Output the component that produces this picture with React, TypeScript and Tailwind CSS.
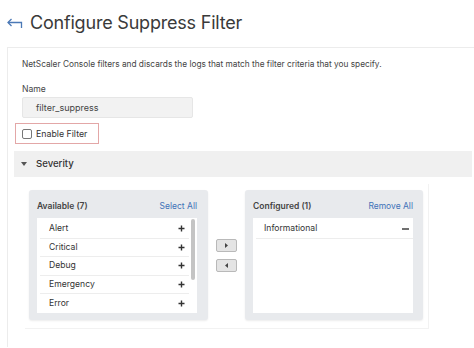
import React from "react";

const avail = ["Alert", "Critical", "Debug", "Emergency", "Error"];

function Plus() {
  return (
    <svg width="7" height="7" viewBox="0 0 7 7">
      <path d="M3.5 0.5v6M0.5 3.5h6" stroke="#333" strokeWidth="1.4" />
    </svg>
  );
}

export default function App() {
  return (
    <div
      className="w-[474px] h-[348px] bg-white overflow-hidden text-[#333]"
      style={{ fontFamily: "Inter, 'Noto Sans', sans-serif" }}
    >
      <div className="h-[47px] flex items-center pl-[7px] pb-[2px]">
        <svg width="16" height="12" viewBox="0 0 16 12" className="mt-[1px]">
          <path d="M1 5.5h13.5v5.5" fill="none" stroke="#4b79b6" strokeWidth="1.3" />
          <path d="M4.5 2L1 5.5L4.5 9" fill="none" stroke="#4b79b6" strokeWidth="1.3" />
        </svg>
        <span className="ml-[7px] text-[18px] leading-none text-[#3a3a3a] tracking-[-0.2px]">
          Configure Suppress Filter
        </span>
      </div>
      <div className="ml-[7px] border-l border-t border-[#ececec] pl-[14px] pt-[10px] h-[300px]">
        <div className="text-[8.3px] leading-[12px] text-[#444]">
          NetScaler Console filters and discards the logs that match the filter criteria that you specify.
        </div>
        <div className="mt-[13px] text-[8.6px] leading-[12px] text-[#444]">Name</div>
        <div className="mt-[2px] w-[171px] h-[21px] bg-[#f2f2f2] border border-[#e6e6e6] rounded-[2px] flex items-center pl-[13px] text-[9px] text-[#444]">
          filter_suppress
        </div>
        <div className="mt-[5px] -ml-[7px] w-[84px] h-[21px] border border-[#e3a7a7] flex items-center pl-[6px]">
          <div className="w-[10px] h-[10px] border border-[#777] rounded-[2px] bg-white" />
          <span className="ml-[4px] text-[8.8px] text-[#333]">Enable Filter</span>
        </div>
        <div className="mt-[7px] -ml-[8px] w-[458px] h-[26px] bg-[#f0f0f0] flex items-center pl-[7px]">
          <svg width="6" height="4" viewBox="0 0 6 4">
            <path d="M0 0h6L3 4z" fill="#555" />
          </svg>
          <span className="ml-[9px] text-[9.6px] font-medium text-[#333]">Severity</span>
        </div>
        <div className="mt-[7px] ml-[3px] w-[404px] h-[145px] border-r border-b border-[#f2f2f2] pt-[6px] pl-[4px] flex items-start">
          {/* Available */}
          <div className="w-[179px] h-[130px] bg-[#e8eaed] rounded-[3px] pl-[8px] pr-[11px] pt-[10px] shadow-[0_1px_2px_rgba(0,0,0,0.08)]">
            <div className="flex justify-between items-center h-[12px] text-[8.5px]">
              <span className="font-semibold text-[#444]">Available (7)</span>
              <span className="text-[#3f72b8]">Select All</span>
            </div>
            <div className="mt-[6px] h-[95px] bg-white relative pt-[2px] overflow-hidden">
              {avail.map((a, i) => (
                <div
                  key={a}
                  className={`ml-[3px] mr-[8px] h-[18.5px] flex items-center justify-between pl-[9px] pr-[4px] text-[8.6px] text-[#333] ${
                    i < 4 ? "border-b border-[#ededed]" : ""
                  }`}
                >
                  <span>{a}</span>
                  <Plus />
                </div>
              ))}
              <div className="absolute right-[2px] top-[1px] w-[4px] h-[61px] bg-[#c4c4c4] rounded-full" />
            </div>
          </div>
          {/* Arrows */}
          <div className="ml-[8px] mr-[8px] mt-[49px] flex flex-col gap-[7px]">
            <div className="w-[21px] h-[13px] bg-[#e4e4e4] border border-[#b9b9b9] rounded-[2px] flex items-center justify-center">
              <svg width="3" height="5" viewBox="0 0 3 5">
                <path d="M0 0L3 2.5L0 5z" fill="#444" />
              </svg>
            </div>
            <div className="w-[21px] h-[13px] bg-[#e4e4e4] border border-[#b9b9b9] rounded-[2px] flex items-center justify-center">
              <svg width="3" height="5" viewBox="0 0 3 5">
                <path d="M3 0L0 2.5L3 5z" fill="#444" />
              </svg>
            </div>
          </div>
          {/* Configured */}
          <div className="w-[178px] h-[130px] bg-[#e8eaed] rounded-[3px] pl-[8px] pr-[10px] pt-[10px] shadow-[0_1px_2px_rgba(0,0,0,0.08)]">
            <div className="flex justify-between items-center h-[12px] text-[8.5px]">
              <span className="font-semibold text-[#444]">Configured (1)</span>
              <span className="text-[#3f72b8]">Remove All</span>
            </div>
            <div className="mt-[6px] h-[95px] bg-white pt-[2px]">
              <div className="ml-[3px] h-[18.5px] flex items-center justify-between pl-[8px] pr-[4px] text-[8.6px] text-[#333] border-b border-[#ededed]">
                <span>Informational</span>
                <svg width="7" height="2" viewBox="0 0 7 2">
                  <path d="M0 1h7" stroke="#333" strokeWidth="1.4" />
                </svg>
              </div>
            </div>
          </div>
        </div>
      </div>
    </div>
  );
}
